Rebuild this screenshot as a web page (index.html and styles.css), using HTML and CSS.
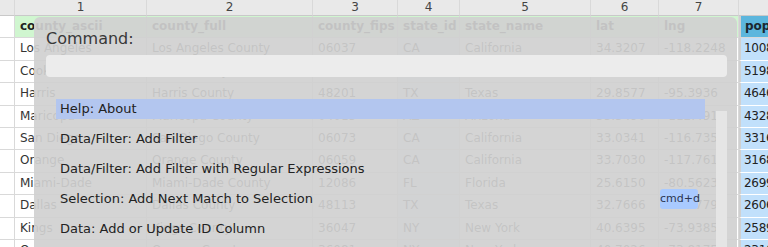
FILE: index.html
```html
<!DOCTYPE html>
<html>
<head>
<meta charset="utf-8">
<link rel="stylesheet" href="styles.css">
</head>
<body>
<div class="sheet">
  <div class="grid">
    <div class="hd rn"></div><div class="hd">1</div><div class="hd">2</div><div class="hd">3</div><div class="hd">4</div><div class="hd">5</div><div class="hd">6</div><div class="hd">7</div><div class="hd">8</div>

    <div class="nm rn"></div><div class="nm">county_ascii</div><div class="nm">county_full</div><div class="nm">county_fips</div><div class="nm">state_id</div><div class="nm">state_name</div><div class="nm">lat</div><div class="nm">lng</div><div class="nm sel">population</div>

    <div class="c rn"></div><div class="c">Los Angeles</div><div class="c">Los Angeles County</div><div class="c">06037</div><div class="c hl">CA</div><div class="c">California</div><div class="c">34.3207</div><div class="c">-118.2248</div><div class="c pop">10081570</div>
    <div class="c rn"></div><div class="c">Cook</div><div class="c">Cook County</div><div class="c">17031</div><div class="c hl">IL</div><div class="c">Illinois</div><div class="c">41.8401</div><div class="c">-87.8168</div><div class="c pop">5198275</div>
    <div class="c rn"></div><div class="c">Harris</div><div class="c">Harris County</div><div class="c">48201</div><div class="c hl">TX</div><div class="c">Texas</div><div class="c">29.8577</div><div class="c">-95.3936</div><div class="c pop">4646630</div>
    <div class="c rn"></div><div class="c">Maricopa</div><div class="c">Maricopa County</div><div class="c">04013</div><div class="c hl">AZ</div><div class="c">Arizona</div><div class="c">33.3490</div><div class="c">-112.4910</div><div class="c pop">4328810</div>
    <div class="c rn"></div><div class="c">San Diego</div><div class="c">San Diego County</div><div class="c">06073</div><div class="c hl">CA</div><div class="c">California</div><div class="c">33.0341</div><div class="c">-116.7353</div><div class="c pop">3316073</div>
    <div class="c rn"></div><div class="c">Orange</div><div class="c">Orange County</div><div class="c">06059</div><div class="c hl">CA</div><div class="c">California</div><div class="c">33.7030</div><div class="c">-117.7611</div><div class="c pop">3168044</div>
    <div class="c rn"></div><div class="c">Miami-Dade</div><div class="c">Miami-Dade County</div><div class="c">12086</div><div class="c hl">FL</div><div class="c">Florida</div><div class="c">25.6150</div><div class="c">-80.5623</div><div class="c pop">2699428</div>
    <div class="c rn"></div><div class="c">Dallas</div><div class="c">Dallas County</div><div class="c">48113</div><div class="c hl">TX</div><div class="c">Texas</div><div class="c">32.7666</div><div class="c">-96.7779</div><div class="c pop">2606358</div>
    <div class="c rn"></div><div class="c">Kings</div><div class="c">Kings County</div><div class="c">36047</div><div class="c hl">NY</div><div class="c">New York</div><div class="c">40.6395</div><div class="c">-73.9385</div><div class="c pop">2589974</div>
    <div class="c rn"></div><div class="c">Queens</div><div class="c">Queens County</div><div class="c">36081</div><div class="c hl">NY</div><div class="c">New York</div><div class="c">40.7026</div><div class="c">-73.8175</div><div class="c pop">2310011</div>
  </div>

  <div class="palette">
    <div class="title">Command:</div>
    <div class="input"></div>
    <div class="list">
      <div class="items">
        <div class="item active"><span>Help: About</span></div>
        <div class="item"><span>Data/Filter: Add Filter</span></div>
        <div class="item"><span>Data/Filter: Add Filter with Regular Expressions</span></div>
        <div class="item"><span>Selection: Add Next Match to Selection</span><span class="badge">cmd+d</span></div>
        <div class="item"><span>Data: Add or Update ID Column</span></div>
      </div>
      <div class="scrollbar"></div>
    </div>
  </div>
</div>
</body>
</html>
```

FILE: styles.css
```css
html, body {
  margin: 0;
  padding: 0;
  background: #ffffff;
  overflow: hidden;
}

.sheet {
  position: relative;
  width: 768px;
  height: 247px;
  overflow: hidden;
  font-family: "DejaVu Sans", Verdana, sans-serif;
}

.grid {
  display: grid;
  grid-template-columns: 15px 132px 166px 85px 62px 131px 68px 80px 90px;
  grid-template-rows: 16px repeat(11, 22.4px);
  width: 829px;
}

.grid > div {
  box-sizing: border-box;
  border-right: 1px solid #d9d9d9;
  border-bottom: 1px solid #d9d9d9;
  white-space: nowrap;
  overflow: hidden;
}

.hd {
  background: #e9e9e9;
  color: #444;
  font-size: 12px;
  line-height: 15px;
  text-align: center;
  border-bottom-color: #c9c9c9 !important;
}

.nm {
  background: #d0f6d0;
  color: #222;
  font-weight: bold;
  font-size: 12px;
  line-height: 21.4px;
  padding-left: 5px;
}

.nm.rn {
  background: #ffffff;
}

.nm.sel {
  background: #5cb6dd;
  color: #1b2730;
  border-left: 2px solid #d0d0d0;
  padding-left: 4px;
}

.c {
  color: #333;
  font-size: 12px;
  line-height: 21.4px;
  padding-left: 5px;
}

.c.rn {
  padding: 0;
}

.c.hl {
  background: #e3eaf8;
}

.c.pop {
  background: #c1e0fb;
  color: #222;
  border-left: 2px solid #d0d0d0;
  border-bottom-color: #ffffff;
  padding-left: 3px;
  letter-spacing: -0.3px;
}

.palette {
  position: absolute;
  left: 34px;
  top: 17px;
  width: 703px;
  height: 240px;
  box-sizing: border-box;
  padding: 12px 10px 0 12px;
  background: rgba(208, 208, 208, 0.92);
  border-radius: 6px 6px 0 0;
}

.title {
  font-size: 16px;
  line-height: 20px;
  color: #383838;
}

.input {
  margin-top: 6px;
  height: 22px;
  background: #ececec;
  border-radius: 4px;
}

.list {
  display: flex;
  margin-top: 22px;
  margin-left: 10px;
  gap: 11px;
}

.items {
  width: 649px;
}

.item {
  display: flex;
  align-items: center;
  justify-content: space-between;
  height: 20px;
  margin-bottom: 10px;
  padding-left: 4px;
  font-size: 13px;
  line-height: 20px;
  color: #222;
}

.item.active {
  background: #b3c6ef;
}

.badge {
  width: 38px;
  height: 20px;
  margin-right: 7px;
  background: #a9caff;
  border-radius: 3px;
  font-size: 11px;
  line-height: 20px;
  color: #2b3550;
  text-align: center;
}

.scrollbar {
  width: 11px;
  margin-top: 12px;
  height: 200px;
  background: #e5e5e5;
}
```
